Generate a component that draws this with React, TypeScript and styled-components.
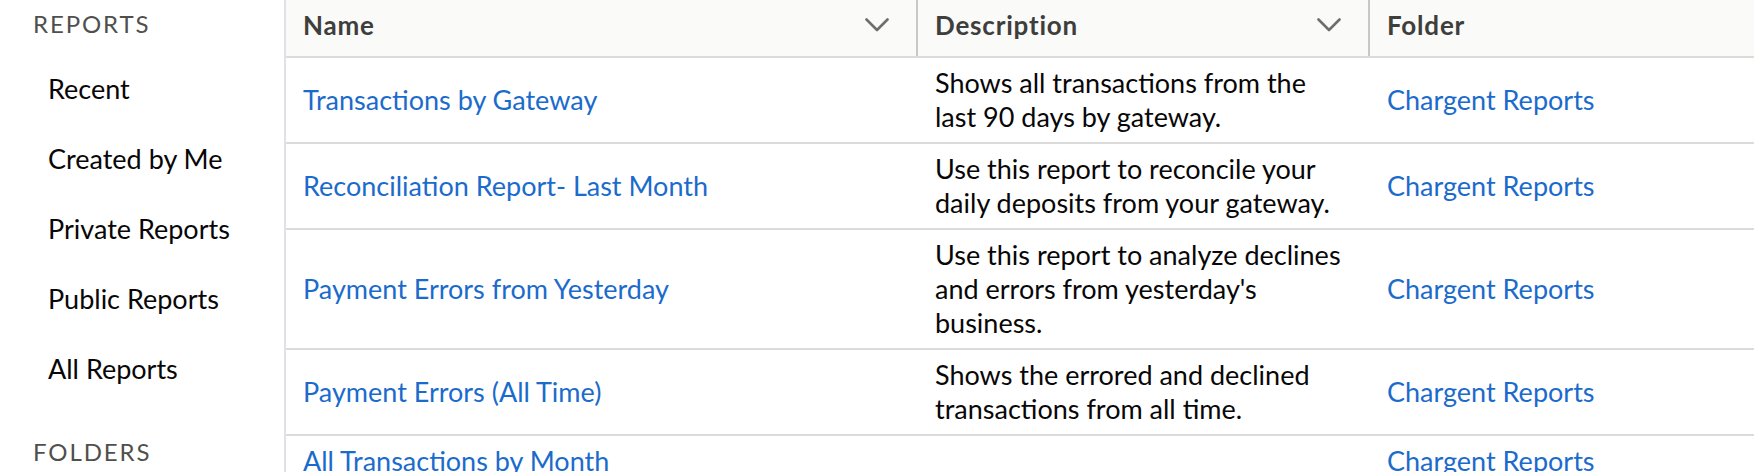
import React from 'react'
import styled, { createGlobalStyle } from 'styled-components'

const GlobalStyle = createGlobalStyle`
  html, body {
    margin: 0;
    padding: 0;
    background: #ffffff;
  }
  body {
    font-family: Lato, "Liberation Sans", Arial, sans-serif;
    color: #080707;
  }
`

const Page = styled.div`
  display: flex;
  width: 1754px;
  height: 472px;
  overflow: hidden;
  background: #fff;
`

const Sidebar = styled.nav`
  width: 284px;
  flex-shrink: 0;
  border-right: 2px solid #dfe0ea;
  display: flex;
  flex-direction: column;
`

const SectionTitle = styled.div<{ $gap?: number }>`
  margin-top: ${(p) => p.$gap ?? 0}px;
  padding-left: 33px;
  font-size: 24px;
  line-height: 34px;
  letter-spacing: 1.9px;
  color: #514f4d;
  text-transform: uppercase;
`

const NavList = styled.ul`
  list-style: none;
  margin: 13px 0 0;
  padding: 0;
`

const NavItem = styled.li`
  height: 70px;
  line-height: 70px;
  padding-left: 48px;
  font-size: 27px;
  color: #080707;
`

const Table = styled.section`
  flex: 1;
  display: flex;
  flex-direction: column;
`

const Row = styled.div<{ $head?: boolean }>`
  display: grid;
  grid-template-columns: 630px 452px 1fr;
  border-bottom: 2px solid #dddbda;
  background: ${(p) => (p.$head ? '#fafaf9' : '#ffffff')};
`

const HeadCell = styled.div<{ $divider?: boolean }>`
  height: 56px;
  display: flex;
  align-items: center;
  justify-content: space-between;
  padding: 0 27px 6px 17px;
  box-sizing: border-box;
  border-left: ${(p) => (p.$divider ? '2px solid #c9c7c5' : 'none')};
  font-size: 26px;
  font-weight: 700;
  letter-spacing: 0.8px;
  color: #3e3e3c;
`

const Cell = styled.div<{ $first?: boolean }>`
  display: flex;
  align-items: center;
  padding: 8px 17px 8px ${(p) => (p.$first ? 17 : 19)}px;
  font-size: 27px;
  line-height: 34px;
  color: #080707;
`

const Desc = styled.div`
  max-width: 420px;
`

const Link = styled.a`
  color: #1b6bcc;
  text-decoration: none;
  cursor: pointer;
`

const Chevron = () => (
  <svg width="24" height="14" viewBox="0 0 24 14" fill="none">
    <path d="M1.5 1.5 L12 12 L22.5 1.5" stroke="#706e6b" strokeWidth="2.6" strokeLinecap="round" strokeLinejoin="round" />
  </svg>
)

type Report = { name: string; desc: string; folder: string }

const reports: Report[] = [
  {
    name: 'Transactions by Gateway',
    desc: 'Shows all transactions from the last 90 days by gateway.',
    folder: 'Chargent Reports',
  },
  {
    name: 'Reconciliation Report- Last Month',
    desc: 'Use this report to reconcile your daily deposits from your gateway.',
    folder: 'Chargent Reports',
  },
  {
    name: 'Payment Errors from Yesterday',
    desc: "Use this report to analyze declines and errors from yesterday's business.",
    folder: 'Chargent Reports',
  },
  {
    name: 'Payment Errors (All Time)',
    desc: 'Shows the errored and declined transactions from all time.',
    folder: 'Chargent Reports',
  },
  {
    name: 'All Transactions by Month',
    desc: '',
    folder: 'Chargent Reports',
  },
]

const navItems = ['Recent', 'Created by Me', 'Private Reports', 'Public Reports', 'All Reports']

export default function App() {
  return (
    <>
      <GlobalStyle />
      <Page>
        <Sidebar>
          <SectionTitle $gap={7}>Reports</SectionTitle>
          <NavList>
            {navItems.map((item) => (
              <NavItem key={item}>{item}</NavItem>
            ))}
          </NavList>
          <SectionTitle $gap={31}>Folders</SectionTitle>
        </Sidebar>
        <Table>
          <Row $head>
            <HeadCell>
              Name
              <Chevron />
            </HeadCell>
            <HeadCell $divider>
              Description
              <Chevron />
            </HeadCell>
            <HeadCell $divider>Folder</HeadCell>
          </Row>
          {reports.map((r) => (
            <Row key={r.name}>
              <Cell $first>
                <Link>{r.name}</Link>
              </Cell>
              <Cell>
                <Desc>{r.desc || '\u00a0'}</Desc>
              </Cell>
              <Cell>
                <Link>{r.folder}</Link>
              </Cell>
            </Row>
          ))}
        </Table>
      </Page>
    </>
  )
}
